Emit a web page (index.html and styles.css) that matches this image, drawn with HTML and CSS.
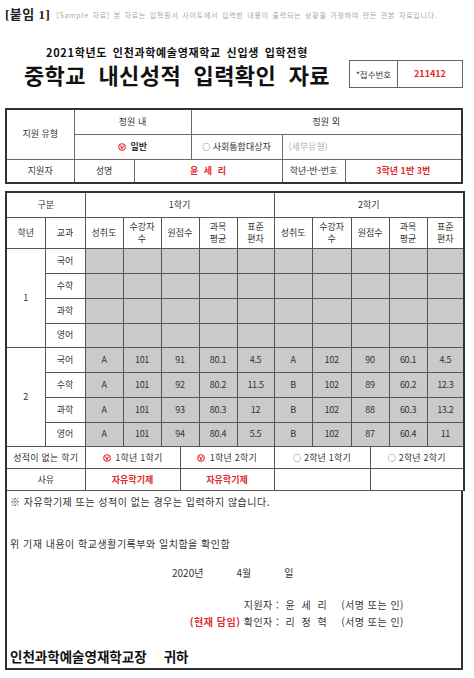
FILE: index.html
```html
<!DOCTYPE html>
<html lang="ko">
<head>
<meta charset="utf-8">
<title>중학교 내신성적 입력확인 자료</title>
<link rel="stylesheet" href="styles.css">
</head>
<body>
<div class="page">
  <div class="attach"><span class="attach-label">[붙임 1]</span><span class="attach-note">[Sample 자료] 본 자료는 입학원서 사이트에서 입력한 내용이 출력되는 상황을 가정하여 만든 견본 자료입니다.</span></div>

  <div class="head">
    <div class="titles">
      <div class="subtitle">2021학년도 인천과학예술영재학교 신입생 입학전형</div>
      <h1 class="title">중학교 내신성적 입력확인 자료</h1>
    </div>
    <table class="receipt">
      <tr><td class="receipt-label">*접수번호</td><td class="receipt-no">211412</td></tr>
    </table>
  </div>

  <table class="apply">
    <colgroup><col class="a1"><col class="a2"><col class="a3"><col class="a4"><col class="a5"><col class="a6"></colgroup>
    <tr>
      <td rowspan="2">지원 유형</td>
      <td colspan="2">정원 내</td>
      <td colspan="3">정원 외</td>
    </tr>
    <tr>
      <td colspan="2" class="strong"><svg class="chk" viewBox="0 0 10 10" width="8" height="8"><circle cx="5" cy="5" r="4.1" fill="none" stroke="#e02a30" stroke-width="1.3"/><path d="M3.1 3.1 L5 7.1 L6.9 3.1" fill="none" stroke="#e02a30" stroke-width="1.3"/></svg> 일반</td>
      <td><span class="circ">○</span> 사회통합대상자</td>
      <td colspan="2" class="hint">(세부유형)</td>
    </tr>
    <tr class="last">
      <td>지원자</td>
      <td>성명</td>
      <td colspan="2" class="red spaced">윤 세 리</td>
      <td>학년-반-번호</td>
      <td class="red">3학년 1반 3번</td>
    </tr>
  </table>

  <table class="grades">
    <colgroup>
      <col class="g-y"><col class="g-s">
      <col class="g38"><col class="g38"><col class="g38"><col class="g38"><col class="g37">
      <col class="g38"><col class="g39"><col class="g38"><col class="g38"><col class="g37">
    </colgroup>
    <tr class="h1">
      <td colspan="2">구분</td>
      <td colspan="5">1학기</td>
      <td colspan="5">2학기</td>
    </tr>
    <tr class="h2">
      <td>학년</td><td>교과</td>
      <td>성취도</td><td>수강자<br>수</td><td>원점수</td><td>과목<br>평균</td><td>표준<br>편차</td>
      <td>성취도</td><td>수강자<br>수</td><td>원점수</td><td>과목<br>평균</td><td>표준<br>편차</td>
    </tr>
    <tr class="r">
      <td rowspan="4">1</td><td>국어</td>
      <td class="g"></td><td class="g"></td><td class="g"></td><td class="g"></td><td class="g"></td>
      <td class="g"></td><td class="g"></td><td class="g"></td><td class="g"></td><td class="g"></td>
    </tr>
    <tr class="r">
      <td>수학</td>
      <td class="g"></td><td class="g"></td><td class="g"></td><td class="g"></td><td class="g"></td>
      <td class="g"></td><td class="g"></td><td class="g"></td><td class="g"></td><td class="g"></td>
    </tr>
    <tr class="r">
      <td>과학</td>
      <td class="g"></td><td class="g"></td><td class="g"></td><td class="g"></td><td class="g"></td>
      <td class="g"></td><td class="g"></td><td class="g"></td><td class="g"></td><td class="g"></td>
    </tr>
    <tr class="r r-last">
      <td>영어</td>
      <td class="g"></td><td class="g"></td><td class="g"></td><td class="g"></td><td class="g"></td>
      <td class="g"></td><td class="g"></td><td class="g"></td><td class="g"></td><td class="g"></td>
    </tr>
    <tr class="r">
      <td rowspan="4">2</td><td>국어</td>
      <td class="g">A</td><td class="g">101</td><td class="g">91</td><td class="g">80.1</td><td class="g">4.5</td>
      <td class="g">A</td><td class="g">102</td><td class="g">90</td><td class="g">60.1</td><td class="g">4.5</td>
    </tr>
    <tr class="r">
      <td>수학</td>
      <td class="g">A</td><td class="g">101</td><td class="g">92</td><td class="g">80.2</td><td class="g">11.5</td>
      <td class="g">B</td><td class="g">102</td><td class="g">89</td><td class="g">60.2</td><td class="g">12.3</td>
    </tr>
    <tr class="r">
      <td>과학</td>
      <td class="g">A</td><td class="g">101</td><td class="g">93</td><td class="g">80.3</td><td class="g">12</td>
      <td class="g">B</td><td class="g">102</td><td class="g">88</td><td class="g">60.3</td><td class="g">13.2</td>
    </tr>
    <tr class="r r-last">
      <td>영어</td>
      <td class="g">A</td><td class="g">101</td><td class="g">94</td><td class="g">80.4</td><td class="g">5.5</td>
      <td class="g">B</td><td class="g">102</td><td class="g">87</td><td class="g">60.4</td><td class="g">11</td>
    </tr>
  </table>

  <table class="nosem">
    <colgroup><col class="n1"><col class="n2"><col class="n3"><col class="n4"><col class="n5"></colgroup>
    <tr class="n-r1">
      <td>성적이 없는 학기</td>
      <td><svg class="chk" viewBox="0 0 10 10" width="8" height="8"><circle cx="5" cy="5" r="4.1" fill="none" stroke="#e02a30" stroke-width="1.3"/><path d="M3.1 3.1 L5 7.1 L6.9 3.1" fill="none" stroke="#e02a30" stroke-width="1.3"/></svg> 1학년 1학기</td>
      <td><svg class="chk" viewBox="0 0 10 10" width="8" height="8"><circle cx="5" cy="5" r="4.1" fill="none" stroke="#e02a30" stroke-width="1.3"/><path d="M3.1 3.1 L5 7.1 L6.9 3.1" fill="none" stroke="#e02a30" stroke-width="1.3"/></svg> 1학년 2학기</td>
      <td><span class="circ">○</span> 2학년 1학기</td>
      <td><span class="circ">○</span> 2학년 2학기</td>
    </tr>
    <tr class="n-r2">
      <td>사유</td>
      <td class="red">자유학기제</td>
      <td class="red">자유학기제</td>
      <td></td>
      <td></td>
    </tr>
  </table>

  <div class="confirm">
    <p class="note">※ 자유학기제 또는 성적이 없는 경우는 입력하지 않습니다.</p>
    <p class="stmt">위 기재 내용이 학교생활기록부와 일치함을 확인함</p>
    <div class="date"><span>2020년</span><span>4월</span><span>일</span></div>
    <div class="signs">
      <div class="sign"><span class="lbl">지원자 :</span><span class="nm">윤 세 리</span><span>(서명 또는 인)</span></div>
      <div class="sign"><span class="lbl"><span class="red">(현재 담임)</span> 확인자 :</span><span class="nm">리 정 혁</span><span>(서명 또는 인)</span></div>
    </div>
    <p class="to"><span>인천과학예술영재학교장</span><span class="to-sfx">귀하</span></p>
  </div>
</div>
</body>
</html>
```

FILE: styles.css
```css
* { box-sizing: border-box; }

html, body {
  margin: 0;
  padding: 0;
  background: #fff;
}

body {
  font-family: "Noto Sans CJK KR", "Noto Sans", sans-serif;
  color: #333;
  font-size: 9px;
}

.page {
  width: 474px;
  padding: 8px 11px 0 5px;
}

.attach {
  display: flex;
  align-items: center;
  height: 14px;
  white-space: nowrap;
}

.attach-label {
  font-family: "Liberation Serif", "Noto Sans CJK KR", serif;
  font-weight: 700;
  font-size: 13px;
  letter-spacing: 0.5px;
  color: #222;
  margin-right: 6px;
  line-height: 14px;
}

.attach-note {
  font-size: 7px;
  color: #a8a8a8;
  letter-spacing: 0.75px;
  word-spacing: 1px;
  line-height: 14px;
}

.head {
  display: flex;
  align-items: flex-start;
  margin-top: 24px;
}

.titles {
  flex: 1;
  text-align: center;
  color: #111;
}

.subtitle {
  font-size: 11px;
  font-weight: 700;
  line-height: 12px;
  letter-spacing: 0.68px;
  word-spacing: 2px;
}

.title {
  margin: 5px 0 0;
  font-size: 22px;
  font-weight: 700;
  line-height: 23px;
  letter-spacing: 0.4px;
  word-spacing: 6px;
}

.receipt {
  margin-top: 14px;
  border-collapse: collapse;
  width: 114px;
  height: 28px;
  table-layout: fixed;
}

.receipt td {
  border: 1px solid #666;
  padding: 0;
  line-height: 12px;
  text-align: center;
}

.receipt-label {
  width: 48px;
  font-size: 8.5px;
  color: #333;
}

.receipt-no {
  font-size: 9px;
  font-weight: 700;
  color: #e02a30;
}

/* application table */
.apply {
  margin-top: 20px;
  width: 458px;
  border-collapse: collapse;
  table-layout: fixed;
  border: 2px solid #333;
}

.a1 { width: 68px; }
.a2 { width: 60px; }
.a3 { width: 57px; }
.a4 { width: 91px; }
.a5 { width: 63px; }
.a6 { width: 117px; }

.apply td {
  border: 1px solid #6a6a6a;
  height: 25px;
  padding: 0;
  text-align: center;
  line-height: 12px;
  white-space: nowrap;
}

.apply .last td { height: 24px; }

.apply .hint {
  text-align: left;
  padding-left: 6px;
  color: #b0b0b0;
}

.strong {
  font-weight: 700;
}

.red {
  color: #e02a30;
  font-weight: 700;
}

.spaced {
  word-spacing: 3px;
}

.chk {
  vertical-align: -1px;
  margin-right: 2px;
}

.circ {
  font-size: 8px;
}

/* grades table */
.grades {
  margin-top: 7px;
  width: 458px;
  border-collapse: collapse;
  table-layout: fixed;
  border: 2px solid #333;
  border-bottom: none;
}

.g-y { width: 39px; }
.g-s { width: 40px; }
.g37 { width: 37px; }
.g38 { width: 38px; }
.g39 { width: 39px; }

.grades td {
  border: 1px solid #555;
  padding: 0;
  text-align: center;
  line-height: 12px;
  white-space: nowrap;
}

.grades .h1 td { height: 25px; }
.grades .h2 td { height: 31px; }
.grades .r td { height: 25px; }
.grades .r-last td { height: 24px; }

.grades td.g {
  background: #cacaca;
  letter-spacing: -0.3px;
}

/* semesters without grades */
.nosem {
  width: 458px;
  border-collapse: collapse;
  table-layout: fixed;
  border-left: 2px solid #333;
  border-right: 2px solid #333;
}

.n1 { width: 79px; }
.n2 { width: 95px; }
.n3 { width: 94px; }
.n4 { width: 96px; }
.n5 { width: 94px; }

.nosem td {
  border: 1px solid #555;
  border-top: none;
  padding: 0;
  text-align: center;
  line-height: 11px;
  white-space: nowrap;
}

.nosem .n-r1 td { height: 22px; letter-spacing: 0.2px; }
.nosem .n-r2 td { height: 22px; }

/* confirmation box */
.confirm {
  width: 458px;
  height: 179px;
  border: 2px solid #333;
  border-top: none;
  padding: 4px 5px 0 3px;
  font-size: 10px;
  color: #333;
}

.confirm p {
  margin: 0;
}

.note {
  line-height: 14px;
  letter-spacing: 0.5px;
}

.stmt {
  margin-top: 28px !important;
  line-height: 14px;
  letter-spacing: 0.5px;
}

.date {
  display: flex;
  margin-top: 15px;
  padding-left: 162px;
  line-height: 14px;
  gap: 33px;
}

.signs {
  margin-top: 18px;
  display: flex;
  flex-direction: column;
  align-items: flex-end;
  padding-right: 52px;
  gap: 3px;
}

.sign {
  display: flex;
  line-height: 14px;
  letter-spacing: 0.5px;
}

.sign .nm {
  margin: 0 14px 0 6px;
  word-spacing: 3px;
}

.to {
  margin-top: 17px !important;
  font-size: 13.5px;
  font-weight: 700;
  line-height: 20px;
  color: #111;
}

.to-sfx {
  margin-left: 17px;
}
```
